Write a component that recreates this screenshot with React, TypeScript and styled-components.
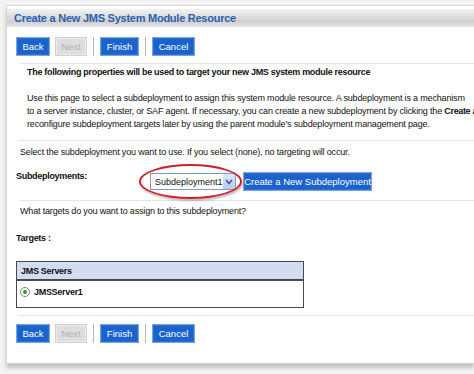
import React from "react";
import styled, { createGlobalStyle } from "styled-components";

const Global = createGlobalStyle`
  html, body { margin: 0; padding: 0; background: #f3f3f3; overflow: hidden; }
  body { font-family: "Liberation Sans", Arial, sans-serif; font-size: 9px; letter-spacing: -0.15px; color: #111; }
`;

const Page = styled.div`
  width: 474px;
  height: 374px;
  padding-top: 5px;
  box-sizing: border-box;
  overflow: hidden;
`;

const Panel = styled.div`
  margin-left: 6px;
  height: 357px;
  background: #fff;
  border: 1px solid #d6d6d6;
  border-right: none;
  border-bottom: 1px solid #cfcfcf;
  box-shadow: 0 4px 4px #c4c4c4;
  display: flex;
  flex-direction: column;
  overflow: hidden;
`;

const TitleBar = styled.div`
  margin-top: 3px;
  height: 18px;
  background: linear-gradient(#f2f2f2, #dcdcdc 45%, #cfcfcf 70%, #e6e6e6);
  display: flex;
  align-items: center;
  padding-left: 7px;
  font-size: 11px;
  letter-spacing: -0.25px;
  font-weight: bold;
  color: #2a5fb0;
`;

const Body = styled.div`
  padding: 0 0 0 9px;
  display: flex;
  flex-direction: column;
`;

const ButtonRow = styled.div<{ $top: number }>`
  display: flex;
  align-items: center;
  gap: 5px;
  height: 19px;
  margin: ${(p) => p.$top}px 0 0 0;
`;

const Btn = styled.button<{ $w: number; $disabled?: boolean }>`
  width: ${(p) => p.$w}px;
  height: 19px;
  padding: 0;
  font-family: "Liberation Sans", Arial, sans-serif;
  font-size: 9.5px;
  white-space: nowrap;
  border: 1px solid ${(p) => (p.$disabled ? "#d0d0d0" : "#7aa3dc")};
  background: ${(p) => (p.$disabled ? "#dedede" : "#1a62cc")};
  color: ${(p) => (p.$disabled ? "#b0b0b0" : "#fff")};
  box-shadow: inset 0 0 0 1px ${(p) => (p.$disabled ? "#ececec" : "#2b70d6")};
`;

const Sep = styled.div`
  width: 1px;
  height: 19px;
  background: #b8b8b8;
  margin: 0 1px;
`;

const Rule = styled.div<{ $top: number }>`
  height: 1px;
  background: #e4e4e4;
  margin-top: ${(p) => p.$top}px;
  margin-left: 3px;
`;

const Text = styled.div<{ $top: number; $bold?: boolean; $indent?: number }>`
  margin-top: ${(p) => p.$top}px;
  margin-left: ${(p) => p.$indent ?? 4}px;
  font-weight: ${(p) => (p.$bold ? "bold" : "normal")};
  letter-spacing: ${(p) => (p.$bold ? "-0.3px" : "-0.17px")};
  line-height: 13px;
  white-space: nowrap;
  color: #111;
  b { letter-spacing: -0.35px; }
`;

const FieldRow = styled.div`
  display: flex;
  align-items: center;
  margin-top: 13px;
  height: 19px;
`;

const FieldLabel = styled.div`
  width: 134px;
  font-weight: bold;
  letter-spacing: -0.3px;
  padding-bottom: 11px;
`;

const SelectWrap = styled.div`
  position: relative;
  display: flex;
  align-items: center;
`;

const Select = styled.div`
  width: 86px;
  height: 17px;
  box-sizing: border-box;
  border: 1px solid #7f9db9;
  background: #fff;
  display: flex;
  align-items: center;
  font-size: 9px;
  letter-spacing: 0;
  color: #111;
  padding-left: 4px;
  justify-content: space-between;
`;

const Arrow = styled.div`
  width: 14px;
  height: 15px;
  background: linear-gradient(#dde8fb, #b6c9f0);
  display: flex;
  align-items: center;
  justify-content: center;
`;

const Ellipse = styled.div`
  position: absolute;
  left: -11px;
  top: -9px;
  width: 103px;
  height: 35px;
  border: 2px solid #d2202a;
  border-radius: 50%;
  box-sizing: border-box;
  box-shadow: 1px 2px 2px rgba(0, 0, 0, 0.25);
  pointer-events: none;
`;

const BigBtn = styled(Btn)`
  margin-left: 7px;
  font-size: 9.5px;
`;

const Table = styled.div`
  margin-top: 16px;
  width: 286px;
  border: 1px solid #4a4a4a;
`;

const THead = styled.div`
  height: 17px;
  background: #d2dcf2;
  border-bottom: 2px solid #4a4a4a;
  display: flex;
  align-items: center;
  padding-left: 4px;
  font-weight: bold;
  letter-spacing: -0.3px;
`;

const TRow = styled.div`
  height: 26px;
  display: flex;
  align-items: flex-start;
  padding: 6px 0 0 3px;
  box-sizing: border-box;
  gap: 4px;
  font-weight: bold;
  letter-spacing: -0.3px;
`;

const Radio = styled.div`
  width: 8px;
  height: 8px;
  border-radius: 50%;
  border: 1px solid #6f8f6f;
  display: flex;
  align-items: center;
  justify-content: center;
  &::after {
    content: "";
    width: 4px;
    height: 4px;
    border-radius: 50%;
    background: #2b9a2b;
  }
`;

const Buttons = ({ top }: { top: number }) => (
  <ButtonRow $top={top}>
    <Btn $w={34}>Back</Btn>
    <Btn $w={32} $disabled>Next</Btn>
    <Sep />
    <Btn $w={39}>Finish</Btn>
    <Sep />
    <Btn $w={43}>Cancel</Btn>
  </ButtonRow>
);

export default function App() {
  return (
    <Page>
      <Global />
      <Panel>
        <TitleBar>Create a New JMS System Module Resource</TitleBar>
        <Body>
          <Buttons top={10} />
          <Rule $top={7} />
          <Text $top={2} $bold $indent={11}>
            The following properties will be used to target your new JMS system module resource
          </Text>
          <Text $top={13} $indent={11}>
            Use this page to select a subdeployment to assign this system module resource. A subdeployment is a mechanism
            <br />
            to a server instance, cluster, or SAF agent. If necessary, you can create a new subdeployment by clicking the <b>Create a</b>
            <br />
            reconfigure subdeployment targets later by using the parent module's subdeployment management page.
          </Text>
          <Rule $top={9} />
          <Text $top={5}>Select the subdeployment you want to use. If you select (none), no targeting will occur.</Text>
          <FieldRow>
            <FieldLabel>Subdeployments:</FieldLabel>
            <SelectWrap>
              <Select>
                Subdeployment1
                <Arrow>
                  <svg width="8" height="6" viewBox="0 0 8 6">
                    <path d="M1 1 L4 4.5 L7 1" stroke="#3a5ea8" strokeWidth="1.6" fill="none" />
                  </svg>
                </Arrow>
              </Select>
              <Ellipse />
            </SelectWrap>
            <BigBtn $w={129}>Create a New Subdeployment</BigBtn>
          </FieldRow>
          <Rule $top={9} />
          <Text $top={4}>What targets do you want to assign to this subdeployment?</Text>
          <Text $top={14} $bold $indent={0}>Targets :</Text>
          <Table>
            <THead>JMS Servers</THead>
            <TRow>
              <Radio />
              <span>JMSServer1</span>
            </TRow>
          </Table>
          <Rule $top={7} />
          <Buttons top={8} />
        </Body>
      </Panel>
    </Page>
  );
}
